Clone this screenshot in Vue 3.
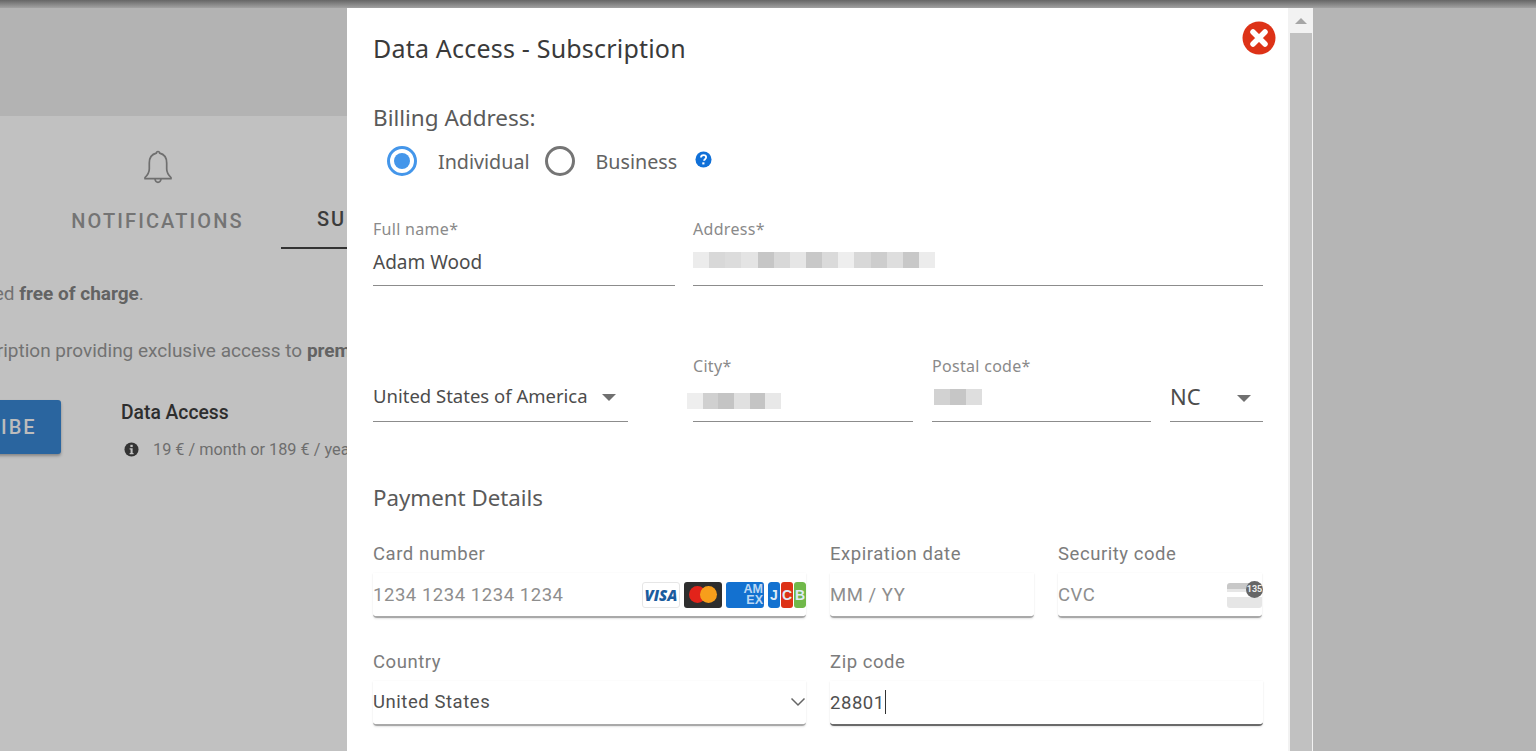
<template>
  <div class="page">
    <div class="top-edge"></div>
    <div class="band"></div>
    <section class="behind">
      <div class="tabs">
        <div class="tab">
          <svg class="bell" viewBox="0 0 34 36" width="34" height="36">
            <path d="M17 3.500c-1 0-1.600.7-1.600 1.700C10.800 6.300 8.300 10 8.300 15v6c0 3.500-1.500 5.800-4.300 8.500v1.200h26v-1.200c-2.800-2.700-4.300-5-4.300-8.500v-6c0-5-2.500-8.700-7.100-9.800 0-1-.6-1.700-1.600-1.700z" fill="none" stroke="#6f6f6f" stroke-width="1.700" stroke-linejoin="round" />
            <path d="M14 31c.3 2.200 1.500 3.300 3 3.300s2.700-1.100 3-3.300" fill="none" stroke="#6f6f6f" stroke-width="1.700" />
          </svg>
          <span>NOTIFICATIONS</span>
        </div>
        <div class="tab active"><span>SUBSCRIPTIONS</span></div>
      </div>
      <p class="line first">You are subscribed <b>free of charge</b>.</p>
      <p class="line second">Get a paid subscription providing exclusive access to <b>premium data</b></p>
      <div class="plan">
        <button class="sub-btn">SUBSCRIBE</button>
        <div class="plan-info">
          <div class="plan-name">Data Access</div>
          <div class="plan-price">
            <svg viewBox="0 0 16 16" width="15" height="15">
              <circle cx="8" cy="8" r="7.500" fill="#333" />
              <rect x="6.800" y="3" width="2.500" height="2.400" fill="#c1c1c1" />
              <path d="M6 6.700h3.200v5h1v1.400H6v-1.400h1v-3.600H6z" fill="#c1c1c1" />
            </svg>
            <span>19 € / month or 189 € / year</span>
          </div>
        </div>
      </div>
    </section>

    <div class="right-shade"></div>

    <div class="dialog">
      <div class="dialog-body">
        <button class="close" aria-label="Close">
          <svg viewBox="0 0 34 34" width="34" height="34">
            <circle cx="17" cy="17" r="16.500" fill="#dd3217" />
            <path d="M11 11l12 12M23 11L11 23" stroke="#fff" stroke-width="5.500" stroke-linecap="round" />
          </svg>
        </button>
        <h2 class="title">Data Access - Subscription</h2>
        <h3 class="billing">Billing Address:</h3>
        <div class="radios">
          <span class="radio on"><i></i></span>
          <span class="radio-label">Individual</span>
          <span class="radio"></span>
          <span class="radio-label">Business</span>
          <svg class="help" viewBox="0 0 18 18" width="17" height="17">
            <circle cx="9" cy="9" r="8.500" fill="#1070d8" />
            <path d="M6.300 7c0-1.700 1.200-2.600 2.800-2.600s2.700.9 2.700 2.300c0 2-2.200 1.900-2.200 3.600" fill="none" stroke="#fff" stroke-width="1.900" />
            <rect x="7.700" y="12" width="2.300" height="2.200" fill="#fff" />
          </svg>
        </div>

        <div class="row row-name">
          <div class="field">
            <label>Full name*</label>
            <div class="value">Adam Wood</div>
          </div>
          <div class="field">
            <label>Address*</label>
            <div class="value">
              <div class="censor">
                <i v-for="(c, i) in addressBlocks" :key="i" :style="{ background: c }"></i>
              </div>
            </div>
          </div>
        </div>

        <div class="row row-place">
          <div class="field select">
            <div class="value">United States of America<span class="caret"></span></div>
          </div>
          <div class="field">
            <label>City*</label>
            <div class="value">
              <div class="censor city">
                <i v-for="(c, i) in cityBlocks" :key="i" :style="{ background: c }"></i>
              </div>
            </div>
          </div>
          <div class="field">
            <label>Postal code*</label>
            <div class="value">
              <div class="censor postal">
                <i v-for="(c, i) in postalBlocks" :key="i" :style="{ background: c }"></i>
              </div>
            </div>
          </div>
          <div class="field select">
            <div class="value state">NC<span class="caret"></span></div>
          </div>
        </div>

        <h3 class="payment">Payment Details</h3>

        <div class="row row-card">
          <div class="stripe">
            <label>Card number</label>
            <div class="stripe-input">
              <span>1234 1234 1234 1234</span>
              <div class="brands">
                <span class="brand visa">VISA</span>
                <span class="brand mc"><i class="red"></i><i class="orange"></i></span>
                <span class="brand amex"><em>AM<br />EX</em></span>
                <span class="brand jcb"><i>J</i><i>C</i><i>B</i></span>
              </div>
            </div>
          </div>
          <div class="stripe">
            <label>Expiration date</label>
            <div class="stripe-input"><span>MM / YY</span></div>
          </div>
          <div class="stripe">
            <label>Security code</label>
            <div class="stripe-input">
              <span>CVC</span>
              <span class="cvc"><b>135</b></span>
            </div>
          </div>
        </div>

        <div class="row row-country">
          <div class="stripe">
            <label>Country</label>
            <div class="stripe-input dark">
              <span>United States</span>
              <svg class="chev" viewBox="0 0 16 10" width="16" height="10">
                <path d="M1.500 1.500L8 8l6.500-6.500" fill="none" stroke="#666" stroke-width="1.500" />
              </svg>
            </div>
          </div>
          <div class="stripe focus">
            <label>Zip code</label>
            <div class="stripe-input dark"><span>28801<u></u></span></div>
          </div>
        </div>
      </div>
      <div class="scrollbar">
        <div class="scroll-up"><span></span></div>
        <div class="scroll-thumb"></div>
      </div>
    </div>
  </div>
</template>

<script setup>
const addressBlocks = ['#ececec', '#d8d8d8', '#dcdcdc', '#e4e4e4', '#c6c6c6', '#d8d8d8', '#e6e6e6', '#c8c8c8', '#dadada', '#eeeeee', '#d8d8d8', '#cdcdcd', '#dedede', '#c8c8c8', '#ececec']
const cityBlocks = ['#eeeeee', '#d0d0d0', '#c4c4c4', '#e0e0e0', '#c4c4c4', '#e8e8e8']
const postalBlocks = ['#d2d2d2', '#c6c6c6', '#dedede']
</script>

<style>
html,
body {
  margin: 0;
  background: #c1c1c1;
}
</style>

<style scoped>
.page {
  position: relative;
  height: 751px;
  overflow: hidden;
  background: #c1c1c1;
  font-family: Roboto, "Liberation Sans", sans-serif;
  color: #6b6b6b;
}

.top-edge {
  height: 8px;
  background: linear-gradient(#666, #a2a2a2);
}

.band {
  height: 108px;
  background: #b3b3b3;
}

.right-shade {
  position: absolute;
  top: 8px;
  right: 0;
  bottom: 0;
  width: 223px;
  background: #b5b5b5;
}

.behind {
  padding-top: 26px;
}

.tabs {
  display: flex;
  gap: 1px;
  margin-left: 35px;
}

.tab {
  width: 245px;
  height: 107px;
  box-sizing: border-box;
  display: flex;
  flex-direction: column;
  align-items: center;
  justify-content: flex-end;
  gap: 25px;
  padding-bottom: 16px;
  font-size: 20px;
  font-weight: 500;
  letter-spacing: 2.1px;
  color: #747474;
}

.tab.active {
  color: #3c3c3c;
  padding-left: 6px;
  border-bottom: 2px solid #333;
}

.line {
  margin: 0;
  font-size: 19px;
  white-space: nowrap;
  color: #727272;
}

.line.first {
  margin: 33px 0 0 -147px;
}

.line.second {
  margin: 34px 0 0 -144px;
}

.line b {
  font-weight: 700;
  color: #636363;
}

.plan {
  display: flex;
  margin-top: 38px;
}

.sub-btn {
  width: 172px;
  height: 54px;
  margin-left: -111px;
  border: none;
  border-radius: 3px;
  background: #2a659f;
  color: #bcbcbc;
  font: 500 20px Roboto, sans-serif;
  letter-spacing: 2px;
  box-shadow: 0 2px 3px rgba(0, 0, 0, 0.3);
}

.plan-info {
  margin-left: 60px;
}

.plan-name {
  margin-top: 1px;
  font-size: 19.300px;
  font-weight: 500;
  color: #2e2e2e;
}

.plan-price {
  display: flex;
  align-items: center;
  gap: 14px;
  margin: 16px 0 0 3px;
  font-size: 16.300px;
  white-space: nowrap;
  color: #6e6e6e;
}

.dialog {
  position: absolute;
  left: 347px;
  top: 8px;
  width: 966px;
  height: 743px;
  display: flex;
  background: #fff;
}

.dialog-body {
  position: relative;
  flex: 1;
  box-sizing: border-box;
  padding: 0 25px 0 26px;
  font-family: "Noto Sans", Roboto, sans-serif;
  color: #4a4a4a;
}

.close {
  position: absolute;
  right: 12px;
  top: 13px;
  padding: 0;
  border: none;
  background: none;
  line-height: 0;
}

.title {
  margin: 23px 0 0;
  font-size: 25px;
  line-height: 34px;
  letter-spacing: 0.2px;
  font-weight: 400;
  color: #3a3a3a;
}

.billing {
  margin: 38px 0 0;
  font-size: 22.500px;
  line-height: 30px;
  font-weight: 400;
  color: #5a5a5a;
}

.radios {
  display: flex;
  align-items: center;
  height: 32px;
  margin: 12px 0 0 14px;
}

.radio {
  width: 30px;
  height: 30px;
  box-sizing: border-box;
  border: 3px solid #757575;
  border-radius: 50%;
  display: flex;
  align-items: center;
  justify-content: center;
}

.radio.on {
  border-color: #4496ea;
}

.radio.on i {
  width: 16px;
  height: 16px;
  border-radius: 50%;
  background: #4496ea;
}

.radio-label {
  margin: 0 15px 0 21px;
  font-size: 19.700px;
  color: #626262;
}

.help {
  margin: -4px 0 0 3px;
}

.row {
  display: flex;
}

.row-name {
  gap: 18px;
  margin-top: 40px;
}

.row-name .field {
  height: 69px;
}

.row-name .field:first-child {
  width: 302px;
}

.row-name .field:last-child {
  flex: 1;
}

.row-place {
  gap: 19px;
  margin-top: 68px;
}

.row-place .field {
  width: 220px;
}

.row-place .field:nth-child(3) {
  width: 219px;
}

.row-place .field:first-child {
  width: 255px;
  margin-right: 46px;
}

.row-place .field:last-child {
  width: 93px;
}

.field {
  height: 68px;
  box-sizing: border-box;
  border-bottom: 1.500px solid #8c8c8c;
  display: flex;
  flex-direction: column;
  justify-content: flex-end;
}

.field label {
  font-size: 16px;
  line-height: 24px;
  color: #8a8a8a;
  letter-spacing: 0.3px;
  margin-bottom: auto;
}

.value {
  display: flex;
  align-items: center;
  justify-content: space-between;
  height: 34px;
  margin-bottom: 6px;
  font-size: 19px;
  color: #4c4c4c;
}

.select .value {
  font-size: 18.500px;
  margin-bottom: 9px;
}

.select .state {
  font-size: 22px;
  margin-bottom: 8px;
}

.caret {
  width: 0;
  height: 0;
  margin-right: 12px;
  margin-top: 5px;
  border-left: 7px solid transparent;
  border-right: 7px solid transparent;
  border-top: 7px solid #707070;
}

.censor {
  display: flex;
  height: 16px;
  width: 242px;
  margin-top: -5px;
  filter: blur(0.6px);
}

.censor i {
  flex: 1;
}

.censor.city {
  width: 94px;
  margin-left: -6px;
  margin-top: 5px;
}

.censor.postal {
  width: 48px;
  margin-left: 2px;
  margin-top: -2px;
}

.payment {
  margin: 61px 0 0;
  font-size: 22.300px;
  line-height: 30px;
  font-weight: 400;
  color: #5a5a5a;
}

.row-card {
  gap: 24px;
  margin-top: 28px;
}

.row-card .stripe:first-child {
  width: 433px;
}

.row-card .stripe {
  width: 204px;
}

.row-country {
  gap: 24px;
  margin-top: 31px;
}

.row-country .stripe:first-child {
  width: 433px;
}

.row-country .stripe:last-child {
  flex: 1;
}

.stripe label {
  display: block;
  font: 400 18.500px/26px Roboto, sans-serif;
  letter-spacing: 0.55px;
  color: #7c7c7c;
}

.stripe-input {
  display: flex;
  align-items: center;
  justify-content: space-between;
  height: 45px;
  margin-top: 6px;
  box-sizing: border-box;
  border-bottom: 2px solid #a9a9a9;
  border-radius: 0 0 4px 4px;
  box-shadow: 0 1px 2px rgba(0, 0, 0, 0.1), 0 0 3px rgba(0, 0, 0, 0.025);
  font: 400 18.500px Roboto, sans-serif;
  letter-spacing: 0.55px;
  color: #8e8e8e;
}

.stripe-input.dark {
  padding-bottom: 2px;
  color: #505050;
}

.focus .stripe-input {
  border-bottom-color: #6a6a6a;
}

u {
  display: inline-block;
  width: 1.500px;
  height: 24px;
  vertical-align: -5px;
  background: #333;
}

.brands {
  display: flex;
  gap: 4px;
}

.brand {
  width: 38px;
  height: 26px;
  box-sizing: border-box;
  border-radius: 3px;
  display: flex;
  align-items: center;
  justify-content: center;
  overflow: hidden;
}

.visa {
  border: 1px solid #e6e6e6;
  font: italic 800 15px "Open Sans", sans-serif;
  color: #1b5c9e;
  letter-spacing: 0;
}

.mc {
  background: #2e2e2e;
}

.mc i {
  width: 17px;
  height: 17px;
  border-radius: 50%;
}

.mc .red {
  background: #e2231a;
}

.mc .orange {
  margin-left: -6px;
  background: #f79e1b;
}

.amex {
  background: #1371d0;
  justify-content: flex-end;
  padding-right: 1px;
}

.amex em {
  font: 700 12.500px/11px "Liberation Sans", sans-serif;
  color: #bcd8f4;
  text-align: right;
  letter-spacing: 0;
}

.jcb {
  gap: 1px;
  align-items: stretch;
}

.jcb i {
  flex: 1;
  border-radius: 3px;
  font: 700 14px/26px "Liberation Sans", sans-serif;
  color: #dfeaf6;
  text-align: center;
  letter-spacing: 0;
}

.jcb i:nth-child(1) {
  background: #1371d0;
}

.jcb i:nth-child(2) {
  background: #dd3217;
}

.jcb i:nth-child(3) {
  background: #70b84a;
}

.cvc {
  position: relative;
  width: 35px;
  height: 25px;
  margin-top: 1px;
  border-radius: 3px;
  background: linear-gradient(#c8c8c8 0 6px, #e6e6e6 6px 9px, #fff 9px 14px, #e6e6e6 14px);
}

.cvc b {
  position: absolute;
  right: -1px;
  top: -2px;
  width: 17px;
  height: 17px;
  border-radius: 50%;
  background: #666;
  color: #eee;
  font: 700 9px/17px Roboto, sans-serif;
  text-align: center;
  letter-spacing: 0;
}

.scrollbar {
  width: 25px;
  flex: none;
  display: flex;
  flex-direction: column;
  background: #f2f2f2;
}

.scroll-up {
  height: 25px;
  display: flex;
  align-items: center;
  justify-content: center;
}

.scroll-up span {
  width: 0;
  height: 0;
  border-left: 6px solid transparent;
  border-right: 6px solid transparent;
  border-bottom: 6px solid #a6a6a6;
}

.scroll-thumb {
  flex: 1;
  margin: 0 1px 0 2px;
  background: #c1c1c1;
}
</style>
